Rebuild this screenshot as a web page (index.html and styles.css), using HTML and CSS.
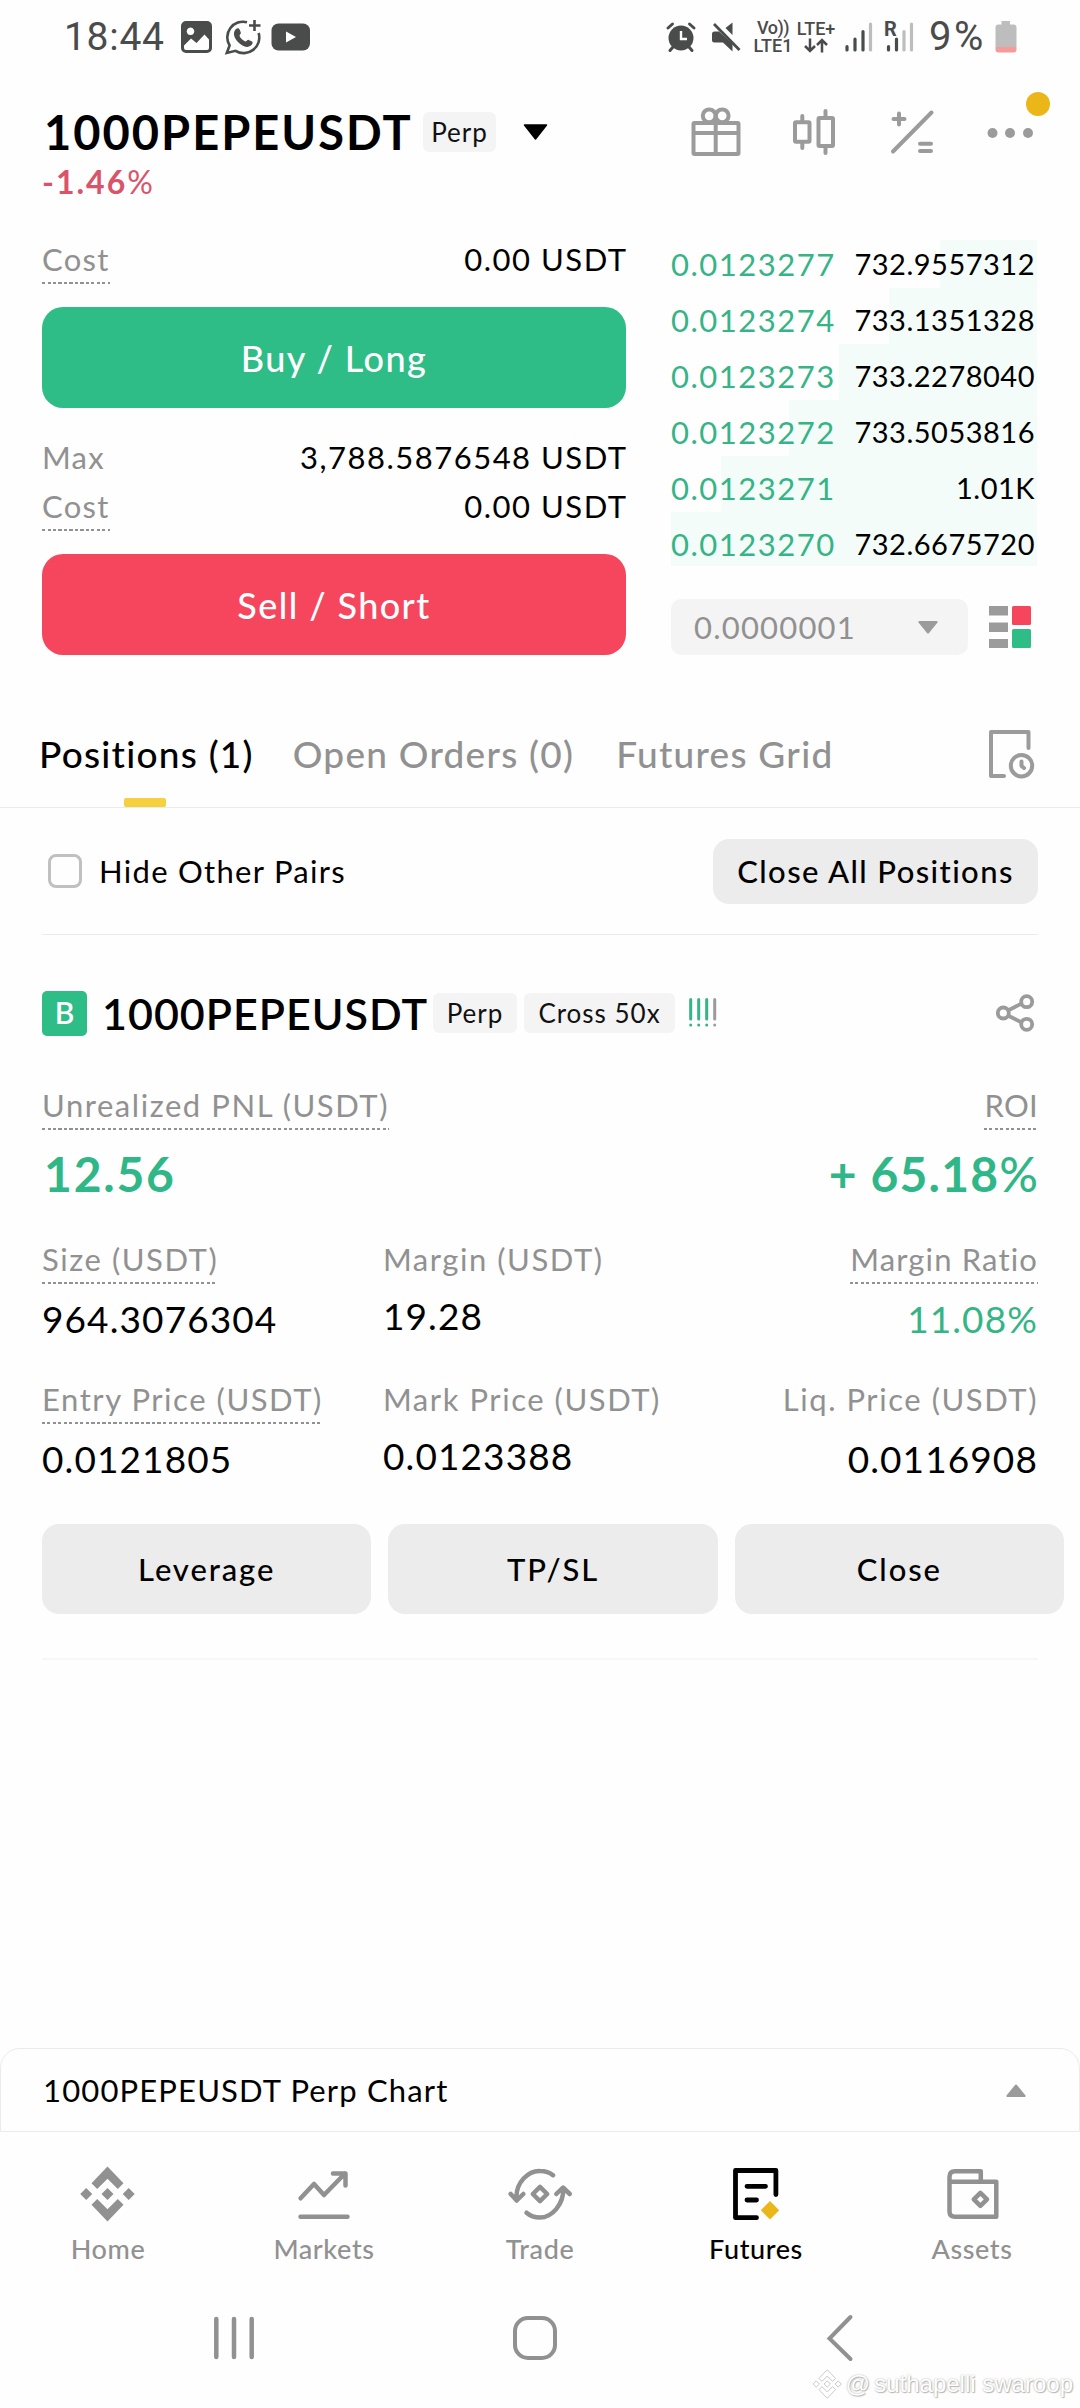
FILE: index.html
```html
<!DOCTYPE html>
<html lang="en">
<head>
    <meta charset="UTF-8">
    <meta name="viewport" content="width=device-width, initial-scale=1.0">
    <title>1000PEPEUSDT Perp</title>
    <link rel="stylesheet" href="styles.css">
</head>
<body>
    <div class="screen">
        <div class="status-bar">
            <span class="clock">18:44</span>
            <svg class="st-photo" width="32" height="32" viewBox="0 0 32 32">
                <path fill="#4a4b4b" fill-rule="evenodd" d="M5 0H26a5 5 0 0 1 5 5V27a5 5 0 0 1-5 5H5a5 5 0 0 1-5-5V5a5 5 0 0 1 5-5ZM9.500 6.500a3.800 3.800 0 1 0 .01 0ZM3 24.500V27a2 2 0 0 0 2 2H26a2 2 0 0 0 2-2V18.500L23.500 13.500 15.500 22 10 17.500Z"/>
            </svg>
            <svg class="st-whatsapp" width="37" height="36" viewBox="0 0 37 36" fill="none" stroke="#4a4b4b">
                <path stroke-width="2.600" d="M22 3.300A15.600 15.600 0 0 0 4.600 26.500L1.800 34 10.500 31.800A15.600 15.600 0 0 0 33.600 14"/>
                <path stroke-width="2.600" d="M29.500 1V12M24 6.500H35.500"/>
                <path fill="#4a4b4b" stroke="none" d="M10.500 10.500c2-2 3.500-1.500 4.300.5l1 2.500c.5 1.300-1.500 2.500-1.300 3.300 1 2.800 3.500 4.800 6 5.700 1.200 0 2-2 3.200-1.600l3.300 1.600c1 .6.800 2-.3 3.300-4 4.200-9.500 1.500-13.500-2.500-3.500-3.800-6-8.800-2.700-12.800Z"/>
            </svg>
            <svg class="st-youtube" width="40" height="28" viewBox="0 0 40 28">
                <rect x="0.500" y="0.500" width="38.500" height="27" rx="7" fill="#4a4b4b"/>
                <path d="M15 8.500V19.500L25 14Z" fill="#fff"/>
            </svg>
            <div class="status-right">
                <svg class="st-alarm" width="30" height="30" viewBox="0 0 30 30" fill="none" stroke="#4a4b4b" stroke-width="3" stroke-linecap="round">
                    <circle cx="15" cy="16" r="12.500" fill="#4a4b4b" stroke="none"/>
                    <path d="M2 6 6.500 2M28 6 23.500 2M4 28.500 7 25M26 28.500 23 25"/>
                    <path d="M15 9V17H21" stroke="#fff" stroke-width="2.400" stroke-linecap="butt"/>
                </svg>
                <svg class="st-mute" width="29" height="30" viewBox="0 0 29 30">
                    <path fill="#4a4b4b" d="M0 12a2.500 2.500 0 0 1 2.500-2.500H7L20.500 22V29.500L11 20.500H2.500A2.500 2.500 0 0 1 0 18ZM20.500 .5V13L13.500 6Z"/>
                    <path d="M2 2 27.500 28" stroke="#4a4b4b" stroke-width="2.800"/>
                </svg>
                <div class="lte"><span class="volte">Vo))</span><span>LTE1</span></div>
                <div class="lte lte-plus"><span>LTE+</span>
                    <svg width="24" height="15" viewBox="0 0 24 15" fill="none" stroke="#4a4b4b" stroke-width="2.500"><path d="M6 .5V13M1 8 6 13 11 8M18 14.500V2M13 7 18 2 23 7"/></svg>
                </div>
                <svg class="st-signal" width="28" height="30" viewBox="0 0 28 30" stroke="#4a4b4b" stroke-width="3.200" stroke-linecap="round">
                    <path d="M2 24.500V28M10 17V28M18 9.500V28"/><path d="M25.500 2V28" stroke="#bdbdbd"/>
                </svg>
                <div class="signal-r"><span>R</span>
                    <svg width="30" height="30" viewBox="0 0 30 30" stroke="#4a4b4b" stroke-width="3.200" stroke-linecap="round">
                        <path d="M4.500 24.500V28M12.500 17V28"/><path d="M20 9.500V28M27.500 2V28" stroke="#bdbdbd"/>
                    </svg>
                </div>
                <span class="battery-text">9%</span>
                <svg class="st-battery" width="22" height="32" viewBox="0 0 22 32">
                    <path fill="#bdbdbd" d="M6.500 0H15V3.500H18.500a3 3 0 0 1 3 3V26H.5V6.500a3 3 0 0 1 3-3H6.500Z"/>
                    <path fill="#f79a9a" d="M.5 26H21.500V28.500a3 3 0 0 1-3 3H3.500a3 3 0 0 1-3-3Z"/>
                </svg>
            </div>
        </div>

        <div class="header">
            <h1 class="symbol">1000PEPEUSDT</h1>
            <span class="badge badge-head">Perp</span>
            <svg class="caret" width="25" height="16" viewBox="0 0 25 16"><path d="M1.500 1H23.500L12.500 15Z" stroke="#000" stroke-width="1.500" stroke-linejoin="round"/></svg>
            <div class="header-icons">
                <svg width="52" height="52" viewBox="0 0 52 52" fill="none" stroke="#9b9b9b" stroke-width="4">
                    <rect x="3.500" y="17" width="45" height="31" rx="1"/>
                    <path d="M3.500 27H48.500M25.700 10V48"/>
                    <circle cx="19.200" cy="9.800" r="6.400"/><circle cx="32.200" cy="9.800" r="6.400"/>
                </svg>
                <svg width="52" height="52" viewBox="0 0 52 52" fill="none" stroke="#9b9b9b" stroke-width="4" stroke-linecap="round">
                    <rect x="7" y="16.200" width="14.500" height="19.500" rx="1"/>
                    <path d="M14.300 10V15M14.300 37V42M37.500 5V11M37.500 41V47"/>
                    <rect x="30.500" y="12" width="14.500" height="28" rx="1"/>
                </svg>
                <svg width="52" height="52" viewBox="0 0 52 52" fill="none" stroke="#9b9b9b" stroke-width="4" stroke-linecap="round">
                    <path d="M13 7.500V18.500M7.500 13H18.500M45.500 6.500 7 45.500M34 37.700H45M34 44.900H45"/>
                </svg>
                <div class="more">
                    <svg width="52" height="52" viewBox="0 0 52 52" fill="#9b9b9b">
                        <circle cx="8.500" cy="27" r="5"/><circle cx="26" cy="27" r="5"/><circle cx="44" cy="27" r="5"/>
                    </svg>
                    <i class="dot"></i>
                </div>
            </div>
        </div>
        <div class="change"><b>-1.46</b><span>%</span></div>

        <div class="trade">
            <div class="order-form">
                <div class="row"><span class="label tip cost">Cost</span><span class="amount">0.00 USDT</span></div>
                <button class="btn buy">Buy / Long</button>
                <div class="row row-max"><span class="label cost">Max</span><span class="amount">3,788.5876548 USDT</span></div>
                <div class="row"><span class="label tip cost">Cost</span><span class="amount">0.00 USDT</span></div>
                <button class="btn sell">Sell / Short</button>
            </div>
            <div class="order-book">
                <div class="bid"><i class="depth" style="width: 97px"></i><span class="price">0.0123277</span><span class="qty">732.9557312</span></div>
                <div class="bid"><i class="depth" style="width: 148px"></i><span class="price">0.0123274</span><span class="qty">733.1351328</span></div>
                <div class="bid"><i class="depth" style="width: 198px"></i><span class="price">0.0123273</span><span class="qty">733.2278040</span></div>
                <div class="bid"><i class="depth" style="width: 248px"></i><span class="price">0.0123272</span><span class="qty">733.5053816</span></div>
                <div class="bid"><i class="depth" style="width: 316px"></i><span class="price">0.0123271</span><span class="qty">1.01K</span></div>
                <div class="bid"><i class="depth" style="width: 366px"></i><span class="price">0.0123270</span><span class="qty">732.6675720</span></div>
                <div class="book-tools">
                    <div class="tick"><span>0.0000001</span>
                        <svg width="20" height="13" viewBox="0 0 20 13" fill="#9b9b9b"><path d="M1 0H19Q20 .5 19.500 1.500L11 12Q10 13 9 12L.5 1.500Q0 .5 1 0Z"/></svg>
                    </div>
                    <svg width="43" height="43" viewBox="0 0 43 43">
                        <path fill="#9b9b9b" d="M0 0H19V9.500H0ZM0 16.500H19V26H0ZM0 33H19V42H0Z"/>
                        <rect x="23" y="0" width="19" height="19" rx="1.500" fill="#f6465d"/>
                        <rect x="23" y="23" width="19" height="19" rx="1.500" fill="#2fbd87"/>
                    </svg>
                </div>
            </div>
        </div>

        <div class="tabs">
            <span class="tab active">Positions (1)</span>
            <span class="tab tab-orders">Open Orders (0)</span>
            <span class="tab tab-grid">Futures Grid</span>
            <svg class="history" width="48" height="48" viewBox="0 0 48 48" fill="none" stroke="#9b9b9b" stroke-width="4" stroke-linecap="round" stroke-linejoin="round">
                <path d="M39.500 18V2H2V46H15"/><circle cx="32.500" cy="35.700" r="10.700"/><path d="M32.500 31.500V36L35 38"/>
            </svg>
        </div>

        <div class="filter">
            <span class="checkbox"></span>
            <span class="filter-text">Hide Other Pairs</span>
            <button class="close-all">Close All Positions</button>
        </div>

        <div class="position">
            <div class="pos-head">
                <span class="side">B</span>
                <h2 class="pos-symbol">1000PEPEUSDT</h2>
                <span class="badge badge-perp">Perp</span>
                <span class="badge badge-cross">Cross 50x</span>
                <svg class="risk" width="30" height="30" viewBox="0 0 30 30" stroke="#35b486" stroke-width="3" stroke-linecap="round">
                    <path d="M2.700 1.500V21M10.700 1.500V21M18.700 1.500V21M2.700 27V27.010M10.700 27V27.010M18.700 27V27.010"/>
                    <path d="M26.700 1.500V21M26.700 27V27.010" stroke="#9b9b9b"/>
                </svg>
                <svg class="share" width="40" height="40" viewBox="0 0 40 40" fill="none" stroke="#9b9b9b" stroke-width="3.800">
                    <circle cx="7.300" cy="20" r="5.500"/><circle cx="30.700" cy="8.700" r="5.500"/><circle cx="30.700" cy="31.300" r="5.500"/>
                    <path d="M12 17.500 25.700 10.500M12 22.500 25.700 29.500"/>
                </svg>
            </div>
            <div class="pnl">
                <div class="cell"><span class="label tip">Unrealized PNL (USDT)</span><span class="big">12.56</span></div>
                <div class="cell right"><span class="label tip roi-label">ROI</span><span class="big roi">+ 65.18<span class="pct">%</span></span></div>
            </div>
            <div class="stats">
                <div class="cell"><span class="label tip">Size (USDT)</span><span class="value">964.3076304</span></div>
                <div class="cell mid"><span class="label">Margin (USDT)</span><span class="value">19.28</span></div>
                <div class="cell right"><span class="label tip ratio-label">Margin Ratio</span><span class="value ratio">11.08%</span></div>
                <div class="cell"><span class="label tip">Entry Price (USDT)</span><span class="value">0.0121805</span></div>
                <div class="cell mid"><span class="label">Mark Price (USDT)</span><span class="value">0.0123388</span></div>
                <div class="cell right"><span class="label">Liq. Price (USDT)</span><span class="value">0.0116908</span></div>
            </div>
            <div class="actions">
                <button>Leverage</button>
                <button>TP/SL</button>
                <button>Close</button>
            </div>
        </div>

        <div class="chart-bar">
            <span>1000PEPEUSDT Perp Chart</span>
            <svg width="20" height="13" viewBox="0 0 20 13" fill="#9b9b9b"><path d="M1 13H19Q20 12.500 19.500 11.500L11 1Q10 0 9 1L.5 11.500Q0 12.500 1 13Z"/></svg>
        </div>

        <div class="nav">
            <div class="nav-item">
                <svg width="56" height="56" viewBox="0 0 56 56" fill="#919191">
                    <path d="M27.500 .5 43.500 17.200 37.800 23 27.500 12.700 17.200 23 11.500 17.200ZM27.500 55.500 43.500 38.800 37.800 33 27.500 43.300 17.200 33 11.500 38.800ZM27.500 22 33.500 28 27.500 34 21.500 28ZM6.200 22 12.200 28 6.200 34 .2 28ZM48.700 22 54.700 28 48.700 34 42.700 28Z"/>
                </svg>
                <span>Home</span>
            </div>
            <div class="nav-item">
                <svg width="56" height="56" viewBox="0 0 56 56" fill="none" stroke="#919191" stroke-width="4.500" stroke-linecap="round" stroke-linejoin="round">
                    <path d="M4.600 32.300 18 18 28 29 49 7.500M37 7.500H49.500V19.500M4.500 50.700H51.500"/>
                </svg>
                <span>Markets</span>
            </div>
            <div class="nav-item">
                <svg width="56" height="56" viewBox="0 0 56 56" fill="none" stroke="#919191" stroke-width="4.500" stroke-linecap="round" stroke-linejoin="round">
                    <path d="M4.500 34C3 16 17 4.500 28 5Q36 5 41 9.200M-1.300 28 4.700 34.500 11.300 28"/>
                    <path d="M51.200 22.500C52 38 40 51.500 28 51.500Q20 51.500 14.500 46.700M44.300 28 51 21.500 57.800 28"/>
                    <path d="M28 20.800 35.200 28 28 35.200 20.800 28Z"/>
                </svg>
                <span>Trade</span>
            </div>
            <div class="nav-item active">
                <svg width="56" height="56" viewBox="0 0 56 56" fill="none" stroke="#000" stroke-width="4.800" stroke-linecap="round" stroke-linejoin="round">
                    <path d="M47.900 28.500V4.500H7.500V51.700H28.500M19 20.300H37.500M19 34H28.500"/>
                    <path d="M42 35 51.200 44.300 42 53.500 32.800 44.300Z" fill="#ebb618" stroke="none"/>
                </svg>
                <span>Futures</span>
            </div>
            <div class="nav-item">
                <svg width="56" height="56" viewBox="0 0 56 56" fill="none" stroke="#919191" stroke-width="4.500" stroke-linejoin="round">
                    <path d="M5.500 15.700H52.300V50.700H11Q5.500 50.700 5.500 45.500V11Q5.500 5.300 11 5.300H36.800V15.700"/>
                    <path d="M36.400 26.800 43 33.300 36.400 39.800 29.800 33.300Z"/>
                </svg>
                <span>Assets</span>
            </div>
        </div>

        <div class="system-nav">
            <svg width="44" height="46" viewBox="0 0 44 46" stroke="#919191" stroke-width="4.500" stroke-linecap="round"><path d="M4.300 4V42M22 4V42M39.700 4V42"/></svg>
            <svg width="46" height="46" viewBox="0 0 46 46" fill="none" stroke="#919191" stroke-width="4"><rect x="3" y="3" width="40" height="40" rx="13"/></svg>
            <svg width="28" height="48" viewBox="0 0 28 48" fill="none" stroke="#919191" stroke-width="4" stroke-linecap="round"><path d="M24.500 3 3.500 24.500 24.500 45"/></svg>
        </div>

        <div class="watermark">
            <svg width="29" height="32" viewBox="0 0 56 56" fill="#fff" stroke="#c4c4c4" stroke-width="1.800">
                <path d="M27.500 .5 43.500 17.200 37.800 23 27.500 12.700 17.200 23 11.500 17.200ZM27.500 55.500 43.500 38.800 37.800 33 27.500 43.300 17.200 33 11.500 38.800ZM27.500 22 33.500 28 27.500 34 21.500 28ZM6.200 22 12.200 28 6.200 34 .2 28ZM48.700 22 54.700 28 48.700 34 42.700 28Z"/>
            </svg>
            <span class="at">@</span><span class="author">suthapelli swaroop</span>
        </div>
    </div>
</body>
</html>
```
FILE: styles.css
```css
* {
    box-sizing: border-box;
}
body {
    margin: 0;
    background-color: #fefefe;
    color: #000;
    font-family: Lato, 'Open Sans', sans-serif;
    font-size: 31px;
}
.screen {
    position: relative;
    display: flex;
    flex-direction: column;
    width: 1080px;
    height: 2408px;
    overflow: hidden;
}
svg {
    display: block;
    flex: none;
    overflow: visible;
}
button {
    border: none;
    padding: 0;
    font-family: inherit;
    color: #000;
}
h1, h2 {
    margin: 0;
}

/* status bar */
.status-bar {
    display: flex;
    align-items: center;
    height: 73px;
    padding-left: 64px;
    font-family: Roboto, sans-serif;
    color: #4a4b4b;
}
.clock {
    width: 117px;
    font-size: 39px;
    letter-spacing: 0.7px;
}
.st-whatsapp {
    margin-left: 12px;
}
.st-youtube {
    margin-left: 9px;
}
.status-right {
    display: flex;
    align-items: center;
    margin-left: auto;
    padding-right: 63px;
}
.st-mute {
    margin-left: 16px;
}
.lte {
    display: flex;
    flex-direction: column;
    align-items: center;
    gap: 1px;
    width: 40px;
    margin-left: 12px;
    font-size: 18px;
    font-weight: 500;
    line-height: 17px;
    white-space: nowrap;
}
.lte-plus {
    margin-left: 3px;
}
.volte {
    letter-spacing: -0.5px;
}
.st-signal {
    margin-left: 9px;
}
.signal-r {
    position: relative;
    margin-left: 11px;
}
.signal-r span {
    position: absolute;
    left: 0;
    top: -3px;
    font-size: 20px;
    font-weight: 700;
    line-height: 20px;
}
.battery-text {
    width: 60px;
    margin-left: 15px;
    font-size: 40px;
    letter-spacing: 2.5px;
}
.st-battery {
    margin-left: 6px;
}

/* header */
.header {
    display: flex;
    align-items: center;
    height: 60px;
    margin-top: 29px;
    padding: 0 44px 0 44px;
}
.symbol {
    width: 379px;
    font-size: 47px;
    font-weight: 700;
    letter-spacing: 2px;
    line-height: 60px;
}
.badge {
    display: flex;
    align-items: center;
    justify-content: center;
    height: 40px;
    border-radius: 6px;
    background-color: #f4f4f4;
    color: #111;
    font-size: 26px;
    letter-spacing: 1px;
}
.badge-head {
    width: 73px;
}
.caret {
    margin-left: 27px;
}
.header-icons {
    display: flex;
    gap: 46px;
    margin-left: auto;
}
.more {
    position: relative;
}
.dot {
    position: absolute;
    right: -14px;
    top: -14px;
    width: 24px;
    height: 24px;
    border-radius: 50%;
    background-color: #ebb618;
}
.change {
    height: 40px;
    padding-left: 42px;
    color: #d9546a;
    font-size: 32px;
    line-height: 40px;
}
.change b {
    font-weight: 700;
    letter-spacing: 2px;
}

/* order form and book */
.trade {
    display: flex;
    justify-content: space-between;
    margin-top: 37px;
    padding: 0 43px 0 42px;
}
.order-form {
    width: 584px;
}
.row {
    display: flex;
    justify-content: space-between;
    align-items: flex-start;
}
.row-max {
    margin: 29px 0 9px;
}
.label {
    color: #919191;
    letter-spacing: 1.55px;
    line-height: 40px;
    white-space: nowrap;
}
.label.cost {
    letter-spacing: 1.25px;
}
/* dashed underline under the labels that open a hint */
.tip {
    height: 45px;
    background: repeating-linear-gradient(90deg, #919191 0 3px, transparent 3px 5.5px) 0 100% / 100% 2px no-repeat;
}
.amount {
    margin-right: -1.5px;
    letter-spacing: 1.5px;
    line-height: 40px;
}
.btn {
    display: block;
    width: 584px;
    height: 101px;
    margin-top: 23px;
    border-radius: 21px;
    color: #fff;
    font-size: 36px;
    font-weight: 500;
    letter-spacing: 1.4px;
}
.buy {
    background-color: #2fbd87;
}
.sell {
    background-color: #f6465d;
}
.order-book {
    width: 366px;
    margin-top: 1px;
}
.bid {
    position: relative;
    display: flex;
    justify-content: space-between;
    height: 56px;
    padding: 8px 2px 0 0;
    line-height: 48px;
}
.bid:first-child {
    height: 48px;
    padding-top: 0;
}
.bid:nth-child(6) {
    height: 54px;
}
/* depth bar grows from the right edge */
.depth {
    position: absolute;
    right: 0;
    top: 0;
    bottom: 0;
    background-color: #f3fcf9;
}
.price, .qty {
    position: relative;
}
.price {
    color: #35b486;
    letter-spacing: 1.5px;
}
.qty {
    font-size: 29px;
    letter-spacing: 0.5px;
}
.book-tools {
    display: flex;
    align-items: center;
    justify-content: space-between;
    margin-top: 33px;
    padding-right: 5px;
}
.tick {
    display: flex;
    align-items: center;
    justify-content: space-between;
    width: 297px;
    height: 56px;
    padding: 0 30px 0 23px;
    border-radius: 10px;
    background-color: #f4f4f4;
    color: #919191;
    letter-spacing: 1.2px;
}

/* tabs */
.tabs {
    display: flex;
    align-items: center;
    height: 108px;
    margin-top: 45px;
    padding: 0 43px 0 39px;
    border-bottom: 1px solid #ebebeb;
    color: #919191;
    font-size: 37px;
    font-weight: 500;
    letter-spacing: 1.25px;
}
.tab {
    position: relative;
    line-height: 107px;
    white-space: nowrap;
}
.tab.active {
    color: #000;
}
.tab.active::after {
    content: "";
    position: absolute;
    left: 50%;
    bottom: 0;
    width: 42px;
    height: 9px;
    margin-left: -22px;
    border-radius: 2px;
    background-color: #f5d03f;
}
.tab-orders {
    margin-left: 39px;
}
.tab-grid {
    margin-left: 42px;
}
.history {
    margin-left: auto;
}

/* filter row */
.filter {
    display: flex;
    align-items: center;
    height: 127px;
    margin: 0 42px;
    border-bottom: 1px solid #ebebeb;
}
.checkbox {
    width: 34px;
    height: 34px;
    margin-left: 6px;
    border: 3px solid #c0c0c0;
    border-radius: 8px;
}
.filter-text {
    margin-left: 17px;
    letter-spacing: 1.3px;
}
.close-all {
    width: 325px;
    height: 65px;
    margin-left: auto;
    border-radius: 16px;
    background-color: #ececec;
    font-size: 31px;
    font-weight: 500;
    letter-spacing: 1.4px;
}

/* position card */
.position {
    margin: 55px 42px 0;
    border-bottom: 2px solid #f7f7f7;
    padding-bottom: 44px;
}
.pos-head {
    display: flex;
    align-items: center;
    height: 46px;
}
.side {
    width: 45px;
    height: 45px;
    border-radius: 5px;
    background-color: #2fbd87;
    color: #fff;
    font-size: 30px;
    font-weight: 600;
    line-height: 42px;
    text-align: center;
}
.pos-symbol {
    width: 331px;
    margin-left: 15px;
    font-size: 43px;
    font-weight: 600;
    letter-spacing: 1px;
}
.badge-perp {
    width: 84px;
}
.badge-cross {
    width: 151px;
    margin-left: 7px;
}
.risk {
    margin-left: 13px;
}
.share {
    margin-left: auto;
    margin-right: 2px;
}
.pnl {
    display: flex;
    justify-content: space-between;
    margin-top: 49px;
}
.cell {
    display: flex;
    flex-direction: column;
    align-items: flex-start;
}
.cell.right {
    align-items: flex-end;
}
.label.roi-label {
    letter-spacing: 0.3px;
}
.label.ratio-label {
    letter-spacing: 1.15px;
}
.big {
    height: 50px;
    margin-top: 19px;
    padding-left: 2px;
    color: #2fb787;
    font-size: 48px;
    font-weight: 700;
    letter-spacing: 1.8px;
    line-height: 50px;
}
.roi {
    letter-spacing: 1.2px;
}
.pct {
    font-weight: 500;
    letter-spacing: 0;
}
.stats {
    display: grid;
    grid-template-columns: 341px 1fr auto;
    row-gap: 38px;
    margin-top: 40px;
}
.stats .cell {
    height: 102px;
    justify-content: space-between;
}
.stats .mid {
    height: 99px;
}
.value {
    height: 44px;
    font-size: 37px;
    letter-spacing: 1.1px;
    line-height: 44px;
}
.ratio {
    color: #35b486;
}
.actions {
    display: flex;
    gap: 17px;
    width: 1022px;
    margin-top: 43px;
}
.actions button {
    flex: 1;
    height: 90px;
    border-radius: 17px;
    background-color: #ececec;
    font-size: 31px;
    font-weight: 500;
    letter-spacing: 1.9px;
}

/* bottom area */
.chart-bar {
    display: flex;
    align-items: center;
    justify-content: space-between;
    height: 84px;
    margin-top: auto;
    padding: 0 53px 0 42px;
    border: 1px solid #ebebeb;
    border-radius: 20px 20px 0 0;
    letter-spacing: 1.15px;
}
.nav {
    display: flex;
    height: 142px;
    padding-top: 34px;
}
.nav-item {
    display: flex;
    flex: 1;
    flex-direction: column;
    align-items: center;
    color: #919191;
    font-size: 27px;
    font-weight: 500;
    letter-spacing: 0.6px;
}
.nav-item span {
    margin-top: 11px;
    line-height: 32px;
}
.nav-item.active {
    color: #000;
}
.system-nav {
    display: flex;
    align-items: center;
    gap: 256px;
    height: 134px;
    padding: 0 0 6px 212px;
}
.system-nav svg:last-child {
    margin-left: 12px;
}
.watermark {
    position: absolute;
    right: 7px;
    bottom: 8px;
    display: flex;
    align-items: center;
    color: #fff;
    font-family: 'Liberation Sans', sans-serif;
    font-size: 24px;
    text-shadow: 0 0 2px #aaa, 1px 1px 1px #bbb;
}
.at {
    margin: 0 4px 0 4px;
}
```
